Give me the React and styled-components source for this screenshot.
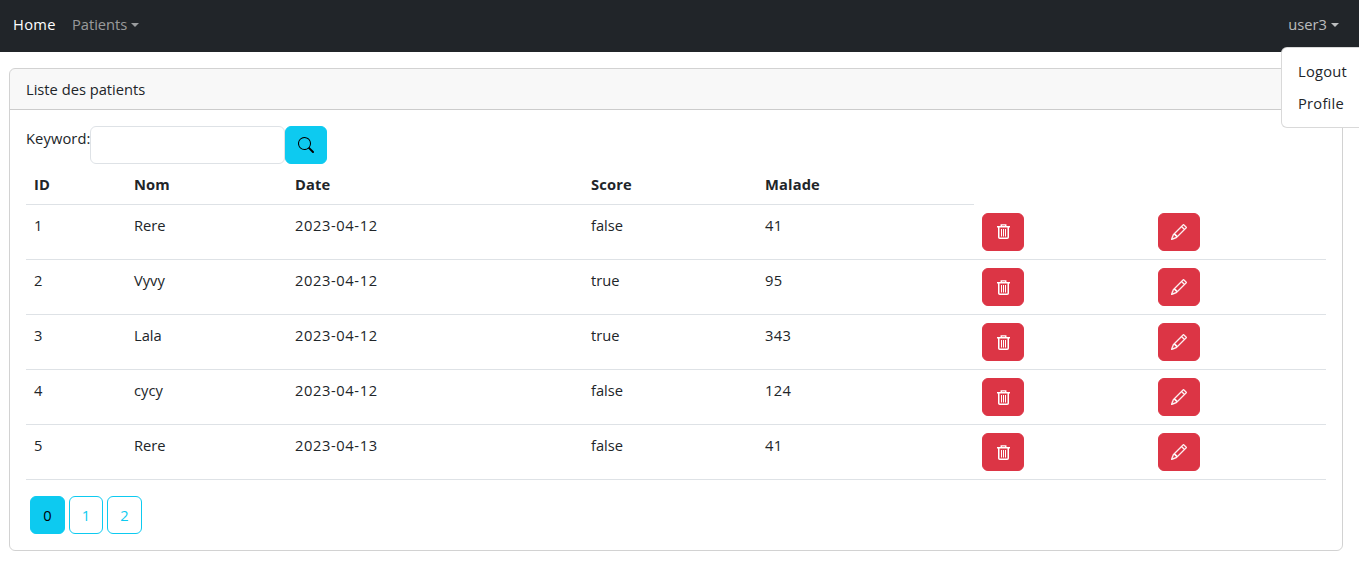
import React from "react";
import styled, { createGlobalStyle } from "styled-components";
import { BsSearch, BsPencil } from "react-icons/bs";

const Global = createGlobalStyle`
  html, body { margin: 0; padding: 0; background: #fff; }
  body {
    font-family: "Open Sans", "Noto Sans", "Liberation Sans", sans-serif;
    font-size: 14.7px;
    line-height: 24px;
    color: #212529;
    overflow: hidden;
  }
  * { box-sizing: border-box; }
`;

const Navbar = styled.nav`
  height: 52px;
  background: #212529;
  display: flex;
  align-items: center;
  justify-content: space-between;
  padding: 0 12px 4px 5px;
  position: relative;
`;
const NavGroup = styled.div`
  display: flex;
  align-items: center;
`;
const NavLink = styled.a`
  padding: 8px;
  color: ${(p) => (p.$active ? "#fff" : "rgba(255,255,255,0.55)")};
  letter-spacing: ${(p) => (p.$active ? "0.35px" : "0")};
  white-space: nowrap;
`;
const Caret = styled.span`
  display: inline-block;
  margin-left: 4px;
  vertical-align: 3px;
  border-top: 4.8px solid currentColor;
  border-left: 4.8px solid transparent;
  border-right: 4.8px solid transparent;
`;
const UserLink = styled(NavLink)`
  color: rgba(255,255,255,0.7);
`;
const Menu = styled.div`
  position: absolute;
  z-index: 5;
  top: 47px;
  left: 1281px;
  width: 90px;
  height: 81px;
  padding: 7px 0;
  background: #fff;
  border: 1px solid rgba(0,0,0,0.15);
  border-radius: 6px;
`;
const MenuItem = styled.div`
  height: 32px;
  line-height: 32px;
  padding-left: 16px;
  letter-spacing: 0.25px;
`;
const Card = styled.section`
  margin: 16px 16px 0 9px;
  height: 483px;
  border: 1px solid rgba(0,0,0,0.176);
  border-radius: 6px;
  overflow: hidden;
`;
const CardHeader = styled.header`
  height: 41px;
  padding: 8px 16px;
  background: rgba(33,37,41,0.03);
  border-bottom: 1px solid rgba(0,0,0,0.176);
`;
const CardBody = styled.div`
  padding: 16px;
`;
const SearchForm = styled.form`
  display: flex;
  align-items: flex-start;
  height: 38px;
`;
const Label = styled.label`
  width: 64px;
  line-height: 24px;
  white-space: nowrap;
  letter-spacing: 0.1px;
`;
const Input = styled.input`
  width: 195px;
  height: 38px;
  border: 1px solid #dee2e6;
  border-radius: 6px;
  background: #fff;
  outline: none;
`;
const IconButton = styled.button`
  width: 42px;
  height: 38px;
  padding: 0;
  border: 1px solid ${(p) => p.$color};
  border-radius: 6px;
  background: ${(p) => p.$color};
  color: ${(p) => p.$fg};
  display: inline-flex;
  align-items: center;
  justify-content: center;
  font-size: 16px;
`;
const Table = styled.table`
  width: 1300px;
  table-layout: fixed;
  border-collapse: collapse;
`;
const Th = styled.th`
  height: 40px;
  padding: 8px;
  text-align: left;
  vertical-align: top;
  font-weight: 700;
  letter-spacing: 0.15px;
  border-bottom: 1px solid #dee2e6;
`;
const Td = styled.td`
  height: 55px;
  padding: 8px;
  vertical-align: top;
  letter-spacing: ${(p) => p.$spacing || 0}px;
  border-bottom: 1px solid #dee2e6;
`;
const Pager = styled.div`
  display: flex;
  gap: 4px;
  padding: 16px 0 0 4px;
`;
const PageButton = styled.button`
  width: ${(p) => p.$w}px;
  height: 38px;
  padding: 0;
  font: inherit;
  border: 1px solid #0dcaf0;
  border-radius: 6px;
  background: ${(p) => (p.$active ? "#0dcaf0" : "#fff")};
  color: ${(p) => (p.$active ? "#000" : "#0dcaf0")};
`;
const BoldPencil = styled(BsPencil)`
  stroke: currentColor;
  stroke-width: 0.35px;
`;

const TrashIcon = () => (
  <svg width="13" height="15" viewBox="0 0 13 15" fill="none" stroke="currentColor" aria-hidden="true">
    <path d="M0 2.75H13" strokeWidth="1.5" />
    <path d="M4.25 2.5V0.9H8.75V2.5" strokeWidth="1.4" />
    <path d="M1.75 3V13.2C1.75 13.8 2.2 14.25 2.8 14.25H10.2C10.8 14.25 11.25 13.8 11.25 13.2V3" strokeWidth="1.5" />
    <path d="M4.5 5V12.5M6.5 5V12.5M8.5 5V12.5" strokeWidth="1" />
  </svg>
);

const rows = [
  [1, "Rere", "2023-04-12", "false", 41],
  [2, "Vyvy", "2023-04-12", "true", 95],
  [3, "Lala", "2023-04-12", "true", 343],
  [4, "cycy", "2023-04-12", "false", 124],
  [5, "Rere", "2023-04-13", "false", 41],
];
const widths = [100, 161, 296, 174, 217, 176, 176];
const spacing = [0.3, 0, 0.6, 0, 0.3];

export default function App() {
  return (
    <>
      <Global />
      <Navbar>
        <NavGroup>
          <NavLink $active>Home</NavLink>
          <NavLink>Patients<Caret /></NavLink>
        </NavGroup>
        <UserLink>user3<Caret /></UserLink>
        <Menu>
          <MenuItem>Logout</MenuItem>
          <MenuItem>Profile</MenuItem>
        </Menu>
      </Navbar>
      <Card>
        <CardHeader>Liste des patients</CardHeader>
        <CardBody>
          <SearchForm onSubmit={(e) => e.preventDefault()}>
            <Label>Keyword:</Label>
            <Input />
            <IconButton type="button" $color="#0dcaf0" $fg="#000"><BsSearch /></IconButton>
          </SearchForm>
          <Table>
            <colgroup>
              {widths.map((w, i) => <col key={i} style={{ width: w }} />)}
            </colgroup>
            <thead>
              <tr>
                {["ID", "Nom", "Date", "Score", "Malade"].map((h) => <Th key={h}>{h}</Th>)}
              </tr>
            </thead>
            <tbody>
              {rows.map((r) => (
                <tr key={r[0]}>
                  {r.map((c, i) => <Td key={i} $spacing={spacing[i]}>{String(c)}</Td>)}
                  <Td><IconButton type="button" $color="#dc3545" $fg="#fff"><TrashIcon /></IconButton></Td>
                  <Td><IconButton type="button" $color="#dc3545" $fg="#fff"><BoldPencil /></IconButton></Td>
                </tr>
              ))}
            </tbody>
          </Table>
          <Pager>
            <PageButton $w={35} $active>0</PageButton>
            <PageButton $w={34}>1</PageButton>
            <PageButton $w={35}>2</PageButton>
          </Pager>
        </CardBody>
      </Card>
    </>
  );
}
